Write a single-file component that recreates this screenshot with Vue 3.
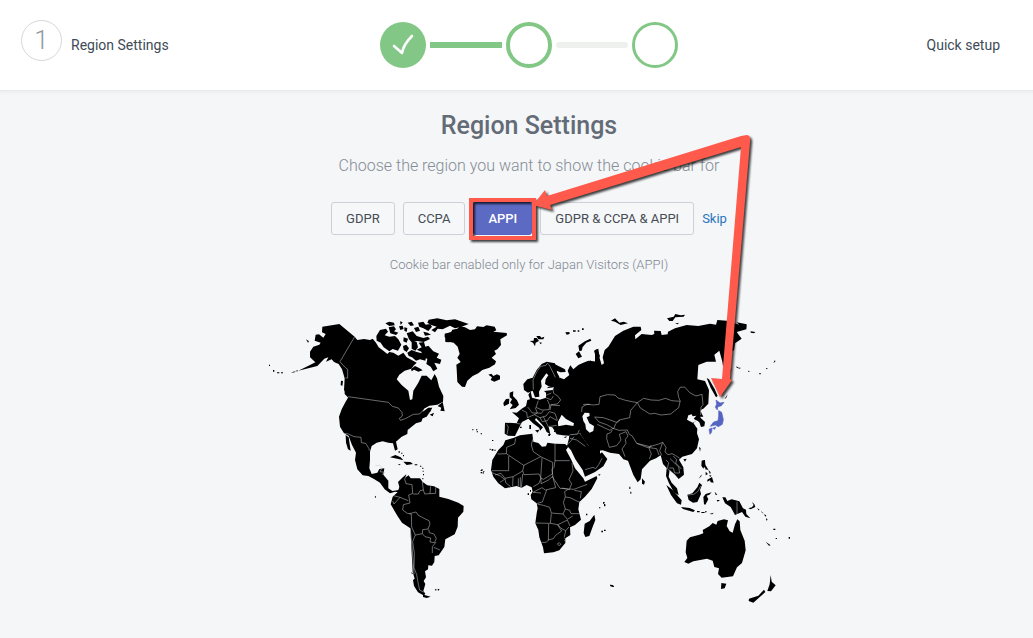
<script setup>
import { ref, computed } from 'vue'

const regions = [
  { id: 'gdpr', label: 'GDPR', note: 'Cookie bar enabled only for EU Visitors (GDPR)' },
  { id: 'ccpa', label: 'CCPA', note: 'Cookie bar enabled only for California Visitors (CCPA)' },
  { id: 'appi', label: 'APPI', note: 'Cookie bar enabled only for Japan Visitors (APPI)' },
  { id: 'all', label: 'GDPR & CCPA & APPI', note: 'Cookie bar enabled for EU, California and Japan Visitors' }
]
const selected = ref('appi')
const note = computed(() => regions.find((r) => r.id === selected.value).note)
</script>

<template>
  <div class="viewport">
    <div class="page">
      <header class="topbar">
        <div class="step-title">
          <span class="step-number">1</span>
          <span>Region Settings</span>
        </div>
        <div class="stepper">
          <span class="dot done">
            <svg viewBox="0 0 46 46" aria-hidden="true"><path d="M14 24 L22 31 C23 25 26 20 32 14" /></svg>
          </span>
          <span class="bar filled"></span>
          <span class="dot"></span>
          <span class="bar"></span>
          <span class="dot thin"></span>
        </div>
        <div class="quick">Quick setup</div>
      </header>

      <main class="stage">
        <h1>Region Settings</h1>
        <p class="lead">Choose the region you want to show the cookie bar for</p>
        <div class="choices">
          <button
            v-for="r in regions"
            :key="r.id"
            type="button"
            :class="['choice', { active: selected === r.id }]"
            @click="selected = r.id"
          >{{ r.label }}</button>
          <a href="#" class="skip">Skip</a>
        </div>
        <p class="note">{{ note }}</p>

        <svg class="map" viewBox="777 930 1620 900" role="img" aria-label="World map">
          <!-- North America -->
          <g transform="translate(780 930)">
            <path class="land" d="M187 50L238 42L284 80L292 90L312 87L330 90L338 86L348 98L356 112L370 122L382 132L388 126L400 128L415 137L430 128L440 142L455 150L470 158L462 166L454 176L434 182L418 194L410 208L425 225L445 242L450 270L457 268L460 242L475 218L485 197L500 197L514 211L524 192L531 205L537 230L550 258L549 275L532 284L508 287L492 296L488 305L505 293L517 293L512 302L500 320L488 325L484 335L468 340L455 350L443 360L442 372L425 380L408 395L413 418L405 422L399 400L385 398L368 394L350 398L335 408L330 425L330 450L328 475L335 492L352 488L358 477L373 475L370 494L385 512L385 535L397 543L412 541L424 536L424 548L405 545L390 550L374 538L360 518L342 507L325 498L308 496L292 478L285 450L288 428L276 405L266 378L252 370L240 350L237 320L245 298L256 277L264 263L252 240L254 205L246 178L236 162L222 156L215 148L198 155L205 142L193 146L172 168L115 182L150 165L166 157L150 142L150 125L160 110L178 104L182 98L164 92L167 74L177 73L190 83L197 72L186 67Z" />
            <path class="land" d="M257 375L266 382L272 422L264 418L258 398ZM138 88L147 94L144 98ZM93 188L103 184L105 187ZM104 184L113 181L114 184ZM51 187h7v3h-7ZM63 187h6v3h-6ZM39 180h4v5h-4ZM27 164h3v4h-3ZM243 212L249 213L247 228L242 225ZM254 243L267 256L263 261L254 252Z" />
            <path class="land" d="M349 78L360 60L378 56L384 65L374 76L388 80L405 78L415 88L424 104L414 122L398 117L388 124L371 112L362 98L350 92ZM376 40L388 35L402 38L404 46L388 48ZM386 52L402 49L408 58L402 64L415 68L408 75L391 70ZM420 34L428 37L422 45ZM417 49L428 47L431 57L421 60ZM433 52L442 54L440 66L433 62ZM431 82L444 86L440 98L430 94ZM440 70L458 64L470 78L490 84L504 80L510 87L491 96L471 93L455 97L447 88ZM443 38L455 35L462 46L452 48ZM462 54L475 50L480 62L468 66ZM474 38L490 35L497 44L510 42L516 50L505 63L490 55L478 50ZM490 65L503 68L513 74L495 77ZM506 29L532 25L560 31L585 28L626 42L605 50L585 55L570 47L548 58L533 56L525 67L514 60L530 50L514 45L502 38ZM429 108L439 104L447 115L440 126L431 120ZM455 93L470 96L474 112L466 122L455 116ZM476 98L492 96L496 110L505 107L520 124L537 131L530 143L544 149L540 162L523 158L532 176L520 184L512 170L499 162L502 147L488 139L484 125L470 119L485 112ZM453 177L465 168L479 175L488 181L475 185L462 179L455 184ZM555 72L572 66L578 82L568 97L556 96ZM533 288L548 276L554 304L541 302L544 293ZM509 314L522 308L518 319ZM500 297L514 302L508 306ZM484 320L493 315L492 325ZM442 128L455 120L470 126L486 130L498 142L496 152L480 148L468 152L456 142L446 138Z" />
            <path class="border" d="M284 80L240 155L254 171L263 178L263 204L257 204M264 260L385 277L397 289L415 294L426 307L427 318L418 325L421 331L436 326L460 313L479 312L490 300M252 370L266 372L282 380L303 382L304 398L317 400L327 416L328 422" />
          </g>

          <!-- Central and South America -->
          <g transform="translate(1020 1350)">
            <path class="land" d="M174 96L186 84L199 73L197 82L206 76L212 85L240 85L248 96L262 106L282 109L298 117L298 140L325 147L355 158L371 168L370 185L354 203L353 230L344 253L316 268L313 291L296 316L284 318L283 336L276 347L265 346L264 358L255 364L258 382L251 393L256 402L250 423L256 431L250 436L234 427L222 408L219 390L224 386L218 365L211 235L186 218L172 197L152 163L158 140L174 125L178 110Z" />
            <path class="land" d="M249 430L256 436L272 440L260 444L249 441ZM150 22L166 15L182 22L190 31L175 27ZM190 35L211 36L219 42L200 45ZM173 42L182 43L179 46ZM224 43h8v3h-8ZM240 47h4v3h-4ZM247 53h3v4h-3ZM248 62h3v3h-3ZM249 72h3v4h-3ZM247 84h3v4h-3ZM176 3h3v6h-3ZM184 8h3v4h-3ZM189 15h3v4h-3ZM104 140L108 137L107 145ZM284 418L290 418L288 423ZM293 416L299 418L294 423ZM422 60h5v3h-5ZM428 66h3v5h-3ZM215 365L219 372L215 371Z" />
            <path class="border" d="M199 76L194 88L198 101L216 104L218 130L206 135L210 159L190 164L188 180L202 190L214 192L215 231L226 255L247 251L248 239L264 237L270 222L267 212L250 204L234 195L228 186L208 191M218 132L235 132L240 122L250 120L247 96M250 120L254 132L270 131L272 109M270 131L287 130L287 112M205 152L180 142L162 162L158 153M180 142L160 137M247 251L255 260L272 264L270 276L283 278L289 266L282 252L268 248L266 238M288 276L277 290L277 309M281 292L300 300M226 255L218 275L223 310L222 353L230 374L236 407L239 420L251 426M211 236L216 290L222 372M105 48L119 45L126 54L120 65L134 67L126 74" />
          </g>

          <!-- Greenland, Europe -->
          <g transform="translate(1320 930)">
            <path class="land" d="M14 71L32 68L37 59L52 56L60 49L75 52L90 60L105 58L111 49L130 51L140 46L164 50L169 61L160 65L176 67L200 69L201 76L181 88L183 105L172 118L163 122L168 132L155 143L168 154L165 163L148 173L127 180L115 190L98 198L82 212L75 231L66 230L52 216L50 178L49 164L62 156L52 143L59 132L53 110L41 98L18 94L25 84L14 82Z" />
            <path class="land" d="M145 194L154 191L160 198L171 193L180 197L180 208L163 215L152 210L156 202ZM269 93L281 92L282 84L290 84L297 93L287 98L285 109L279 98ZM289 78L300 78L304 83L313 80L310 88L295 88ZM298 97L306 98L302 103ZM376 67L388 66L389 72L380 74ZM399 61h8v4h-8ZM413 61h5v4h-5ZM426 55h5v5h-5ZM415 107L435 94L451 86L454 92L439 98L428 111L425 122L418 123ZM407 132L417 124L426 140L415 145Z" />
            <path class="land" d="M252 240L250 222L262 208L278 203L290 180L305 162L320 155L345 160L350 185L358 200L346 228L326 229L315 222L317 208L325 196L319 190L303 212L305 230L297 245L298 260L285 262L278 242L264 248Z" />
            <path class="land" d="M345 163L360 170L375 178L377 186L361 187L350 182L352 200L372 208L388 195L383 182L391 166L400 178L415 165L430 158L445 152L462 154L480 160V450L402 398L388 400L388 377L368 376L350 373L337 352L326 350L331 373L320 366L312 350L300 337L288 324L285 330L309 352L300 362L298 354L279 340L265 326L246 336L238 352L225 378L204 377L194 371L195 338L230 340L237 325L216 307L230 308L245 296L258 288L262 270L270 268L265 254L272 244L276 263L299 269L318 263L318 248L312 243L338 240L342 232L320 235L326 230L342 225Z" />
            <path class="land" d="M209 248L220 244L219 258L231 271L237 284L227 294L209 298L218 285L210 278L216 268L209 262ZM190 279L198 267L208 266L207 281L192 289ZM268 345h5v12h-5ZM285 361L298 359L293 368ZM240 350h5v4h-5ZM335 386L348 386L345 390ZM370 382L381 379L376 386ZM325 372h8v6h-8ZM342 362h4v4h-4ZM97 357h3v4h-3ZM108 358h4v3h-4ZM110 364h4v3h-4ZM122 370h4v3h-4ZM156 390h4v3h-4ZM149 416h3v4h-3ZM155 417h5v5h-5ZM163 419h4v3h-4Z" />
            <path class="water" d="M354 337L361 325L372 320L376 329L388 321L396 329L407 344L389 347L373 342L356 346ZM436 310L448 308L452 317L444 323L451 341L462 348L460 361L443 358L436 343L429 330L429 318Z" />
            <path class="border" d="M280 239L279 210L290 186L302 169L318 166L322 160L328 165L346 202M339 237L341 250L355 260L362 270L352 282L333 284L330 300M318 256L334 249M316 263L333 269L340 258M322 270L329 285L327 299L306 300L288 292L295 272M263 291L277 309L292 309L286 293M245 300L260 307L262 323L283 314L292 309L304 310L310 302M283 314L300 323L318 318L328 305L345 310L352 330M300 323L307 335L322 332L330 320L352 332M310 320L325 350L350 346M332 285L361 287L397 293L392 312M200 343L205 351L201 374M230 340L246 343M425 300L423 290L432 283L450 283L474 285M388 346L411 350L428 354M405 332L426 344L440 345M388 376L411 370L425 371M411 350L416 366L432 390L445 407" />
          </g>

          <!-- Northern Asia -->
          <g transform="translate(1770 930)">
            <path class="land" d="M0 150L15 168V120L25 116L29 145L35 165L42 160L38 142L44 120L55 110L75 78L100 62L130 50L152 50L154 60L135 76L136 88L155 72L185 75L193 72L192 62L212 63L215 75L233 73L234 65L255 55L290 45L325 48L360 41L378 44L382 30L410 32L440 42L470 48L469 58L440 66L455 86L435 100L432 120L417 130L424 180L417 206L402 190L397 155L388 122L373 134L378 155L350 155L325 165L322 208L345 213L357 240L355 281L340 296L330 300L340 320L0 330Z" />
            <path class="land" d="M350 204L357 208L374 237L383 258L378 262L362 233ZM63 32L75 25L88 38L101 35L114 40L92 45L75 35ZM231 25L251 20L256 12L272 16L285 14L281 20L256 22L248 33L238 33ZM255 41L266 38L264 43ZM440 37L470 43L470 48L450 47ZM482 64L496 66L492 70L482 68ZM439 169L446 173L452 173L450 176L440 173ZM474 182L480 184L475 186ZM508 189h4v4h-4ZM528 174L534 175L529 178ZM550 159L555 150L556 155ZM403 268L413 253L409 263ZM12 122L22 118L30 139L20 149Z" />
            <path class="japan" d="M378 270L390 279L402 277L394 287L383 291L382 300L376 292L380 282ZM386 302L395 307L400 329L397 343L385 350L376 345L361 349L371 336L384 332L386 318ZM357 358L366 354L365 366L360 373ZM368 355L377 351L374 358Z" />
          </g>

          <!-- Southern Asia -->
          <g transform="translate(1650 1140)">
            <path class="land" d="M30 75H459L454 90L443 100L453 115L465 126L463 139L453 141L448 127L440 121L430 129L442 146L441 160L447 178L441 205L426 222L397 230L387 239L400 262L402 284L386 297L375 284L359 270L356 290L365 308L381 325L386 346L372 337L357 310L348 288L350 264L339 252L332 226L318 235L300 242L276 268L272 298L263 307L250 285L234 242L220 238L207 222L180 218L158 211L140 213L120 196L110 190L91 159L63 163L50 152L30 150Z" />
            <path class="land" d="M51 197L60 164L88 160L105 183L118 202L129 219L148 223L156 217L172 237L160 259L135 276L105 290L98 270L76 238L63 211ZM276 295L285 305L282 314L276 311ZM400 238L410 236L405 245ZM447 200L452 205L450 215ZM455 242L465 240L466 254L460 266L454 257Z" />
            <path class="water" d="M24 126L35 104L48 117L72 130L70 138L48 134L25 139ZM97 109L104 98L118 99L119 108L110 112L118 130L132 138L130 153L119 158L108 148L106 133L100 123ZM0 164L7 163L12 171L26 169L50 174L51 192L40 187L25 193L0 185ZM411 119L415 106L425 103L428 109L439 107L431 116L440 122L428 128Z" />
            <path class="border" d="M95 96L96 81L111 73L130 75L147 73L150 50L172 44L195 45L204 54L227 61L246 65L262 68L242 91L239 113L211 119L200 127L183 121L160 113L134 111M262 68L281 55L303 60L327 61L346 55L365 62L391 64L386 52L383 35L390 22L404 21L419 38L438 48L456 43L459 74L453 81L452 105M262 68L271 84L300 102L314 100L333 105L362 102L386 83L390 65M134 111L147 126L170 134L191 146L197 131L210 119M142 133L160 142L180 151L189 145L207 151L232 150L238 163L247 168L260 190L300 200L326 192L338 187L348 202L345 216L354 224L366 221L376 226L389 235M260 190L291 202L320 206L327 225M304 195L297 205L304 222L298 237M338 187L329 212L335 226M178 202L170 176L171 162L182 158L187 150M178 202L200 197L213 180L208 163L228 155L234 168L226 178L228 190L216 207L225 230M60 175L80 180L106 199M61 164L82 163L88 150M51 194L62 184L72 170M105 269L129 262L137 266L146 254L156 235M348 240L356 248L352 266L365 278M360 236L374 249L386 261L389 279L374 279L370 264L358 264M370 228L380 239L377 249L394 267" />
          </g>

          <!-- Africa -->
          <g transform="translate(1410 1290)">
            <path class="land" d="M106 31L130 24L150 16L187 11L190 35L205 39L216 50L228 49L232 38L255 41L285 42L295 50L288 60L303 88L315 115L340 145L345 155L380 138L382 145L365 177L345 200L328 216L325 238L333 269L315 285L300 292L301 315L286 325L286 339L268 361L250 367L222 370L219 352L208 322L205 300L196 280L200 250L203 235L200 220L184 208L182 195L188 185L185 172L170 165L155 173L140 168L105 175L85 160L70 140L63 120L67 90L85 60L100 45Z" />
            <path class="land" d="M373 254L376 270L367 293L358 318L346 321L341 309L344 281L359 273ZM384 134L392 132L388 137ZM173 190h4v5h-4ZM180 180h3v5h-3ZM34 118h4v3h-4ZM32 126h4v4h-4ZM40 123h3v3h-3ZM399 217h3v4h-3ZM402 225h4v4h-4ZM387 232h4v3h-4ZM348 251h4v5h-4ZM394 302h5v5h-5ZM402 299h5v4h-5ZM420 464L428 465L433 470L421 469Z" />
            <path class="border" d="M137 25L134 42L110 52L109 71L83 72M109 71L161 106L212 80L190 65L184 45L188 28M212 80L248 97L247 132L220 148L212 143L216 84M255 41V92H299M255 92L252 112L246 118L249 143L270 175L312 178L325 173L352 163M306 99L309 123L297 149L305 161L298 179L276 174M116 78V122L66 122M66 128L91 138L104 148L90 157M75 135L93 130L105 145L129 140L158 123L162 105M105 145L107 158L122 170M129 140L128 168M145 145V168M151 142V171M158 132L154 172M158 123L162 134L207 132L213 144L207 160L190 170M213 144L213 161L234 151L248 139L257 173L226 180L216 173L189 187M230 180L223 199L217 216L202 220M190 187L213 189M202 222L220 226L239 232L244 249L279 252L286 237L280 217L286 200L284 185L293 179M286 201L300 203L333 219M313 181L334 185L331 205M286 237L299 241L303 251H329M279 252L292 268L308 258M244 251L241 280L196 279M241 280L264 284L292 270L300 288M264 284L273 295L287 302L297 291M263 285L275 303L257 316L250 326L234 330M236 282L235 331L228 337L214 337M287 302L283 321M283 324L288 329L282 333M268 338L273 343L267 347L262 342Z" />
          </g>

          <!-- Oceania and island Asia -->
          <g transform="translate(1800 1320)">
            <path class="land" d="M260 302L270 292L298 284L310 280L308 270L328 259L338 249L349 254L353 243L372 238L384 241L380 258L389 274L398 278L405 253L412 238L419 244L421 270L434 302L437 331L426 369L411 382L399 409L365 413L354 402L357 385L343 381L338 362L321 356L280 364L265 371L253 366L262 354L257 337Z" />
            <path class="land" d="M364 429L379 431L374 445L363 447ZM512 405L515 425L527 436L513 454L502 453L509 433ZM492 449L496 456L460 488L446 483L447 476L475 467ZM199 135L218 150L245 181L243 194L231 190L213 165ZM243 201L269 204L285 211L280 216L249 207ZM291 213h8v4h-8ZM304 216h10v3h-10ZM315 214h5v3h-5ZM328 222L341 218L337 223ZM262 164L277 160L292 142L298 128L306 135L300 150L303 162L292 186L279 188L266 180ZM310 171L317 162L335 157L328 164L320 167L325 178L316 194L312 193ZM344 155L352 164L347 165ZM350 180L360 180L353 185ZM367 172L376 172L382 183L395 178L418 184L429 205L438 209L439 222L451 235L436 230L426 216L405 225L392 201L375 190ZM445 205L456 202L463 192L466 201L452 208ZM456 186L463 193L460 194ZM472 204L479 210L475 211ZM483 212L491 221L486 218ZM492 223L499 226L496 230ZM498 234L503 239L499 242ZM497 305L512 316L507 317ZM520 266h6v4h-6ZM527 294h4v3h-4ZM566 291h4v5h-4ZM307 62L315 61L315 73L326 91L318 87L310 78ZM317 95L324 102L317 106ZM328 105L335 107L330 111ZM322 119L336 111L341 128L332 127L330 121L322 125ZM296 116L305 103L304 109ZM325 90L332 97L330 103ZM315 83L321 84L318 91ZM88 140h3v7h-3ZM91 155h3v6h-3ZM10 186h4v4h-4ZM12 192h4v4h-4ZM30 434L42 438L41 441L33 439Z" />
            <path class="border" d="M411 185V223M263 165L281 163L294 154L302 138" />
          </g>
        </svg>

        <svg class="callout" viewBox="259 91 540 520" aria-hidden="true">
          <rect x="471" y="200" width="63" height="38" class="frame" />
          <path class="arrow" d="M741 136L747 135Q751 136 750 142L730 379L732 380L720 397L711 378L722 379L741 147L550 205L552 210L533 205L545 190L547 196Z" />
        </svg>
      </main>
    </div>
  </div>
</template>

<style>
body {
  margin: 0;
  background: #f4f6f8;
}
</style>

<style scoped>
.viewport {
  overflow: hidden;
  font-family: Roboto, "Liberation Sans", sans-serif;
  color: #3e4b58;
}
.page {
  width: calc(100% + 25px);
}
.topbar {
  display: grid;
  grid-template-columns: 1fr auto 1fr;
  align-items: center;
  padding: 20px 21px 21px;
  background: #fff;
  border-bottom: 1px solid #e8eaed;
  box-shadow: 0 1px 3px #e8eaed;
  font-size: 14px;
  line-height: 20px;
}
.step-title {
  display: flex;
  align-items: center;
  gap: 9px;
}
.step-number {
  box-sizing: border-box;
  width: 41px;
  height: 41px;
  margin-bottom: 8px;
  border: 1px solid #d5d7d9;
  border-radius: 50%;
  font-size: 26px;
  font-weight: 300;
  line-height: 38px;
  text-align: center;
  color: #919aa3;
}
.stepper {
  display: flex;
  align-items: center;
  gap: 4px;
}
.dot {
  box-sizing: border-box;
  width: 46px;
  height: 46px;
  border: 4px solid #82c785;
  border-radius: 50%;
}
.dot.thin {
  border-width: 3px;
}
.dot.done {
  border: 0;
  background: #82c785;
}
.dot svg {
  display: block;
  fill: none;
  stroke: #fff;
  stroke-width: 2.6;
  stroke-linecap: round;
  stroke-linejoin: round;
}
.bar {
  width: 72px;
  height: 6px;
  border-radius: 3px;
  background: #eef0ee;
}
.bar.filled {
  border-radius: 0;
  background: #82c785;
}
.quick {
  justify-self: end;
  margin-right: 37px;
}
.stage {
  position: relative;
  width: 540px;
  margin: 0 auto;
  text-align: center;
}
h1 {
  margin: 0;
  padding-top: 19px;
  font-size: 25px;
  font-weight: 500;
  line-height: 32px;
  color: #636b76;
}
.lead {
  margin: 14px 0 0;
  font-size: 16px;
  font-weight: 300;
  line-height: 20px;
  color: #858c95;
}
.choices {
  display: flex;
  justify-content: center;
  align-items: center;
  gap: 8px;
  margin-top: 26px;
}
.choice {
  padding: 0 14px;
  border: 1px solid #ccd1d9;
  border-radius: 3px;
  background: #f5f7f9;
  font: 400 13px/31px Roboto, "Liberation Sans", sans-serif;
  color: #474c54;
}
.choice.active {
  border-color: #5563c1;
  background: #5c6ac4;
  font-weight: 500;
  color: #fff;
}
.skip {
  font-size: 13px;
  color: #2a74bd;
  text-decoration: none;
}
.note {
  margin: 20px 0 0;
  font-size: 13px;
  font-weight: 300;
  line-height: 20px;
  color: #7f8790;
}
.map {
  display: block;
  width: 100%;
  margin-top: 35px;
}
.land {
  fill: #000;
}
.water {
  fill: #f4f6f8;
}
.japan {
  fill: #5563c1;
  stroke: #5563c1;
  stroke-width: 2;
}
.border {
  fill: none;
  stroke: #c4c6c8;
  stroke-width: 1.6;
}
.callout {
  position: absolute;
  top: 0;
  left: 0;
  width: 540px;
  height: 520px;
  pointer-events: none;
  filter: drop-shadow(2px 2px 1px rgba(0, 0, 0, 0.75));
}
.frame {
  fill: none;
  stroke: #ff5a4b;
  stroke-width: 4;
}
.arrow {
  fill: #ff5a4b;
}
</style>
